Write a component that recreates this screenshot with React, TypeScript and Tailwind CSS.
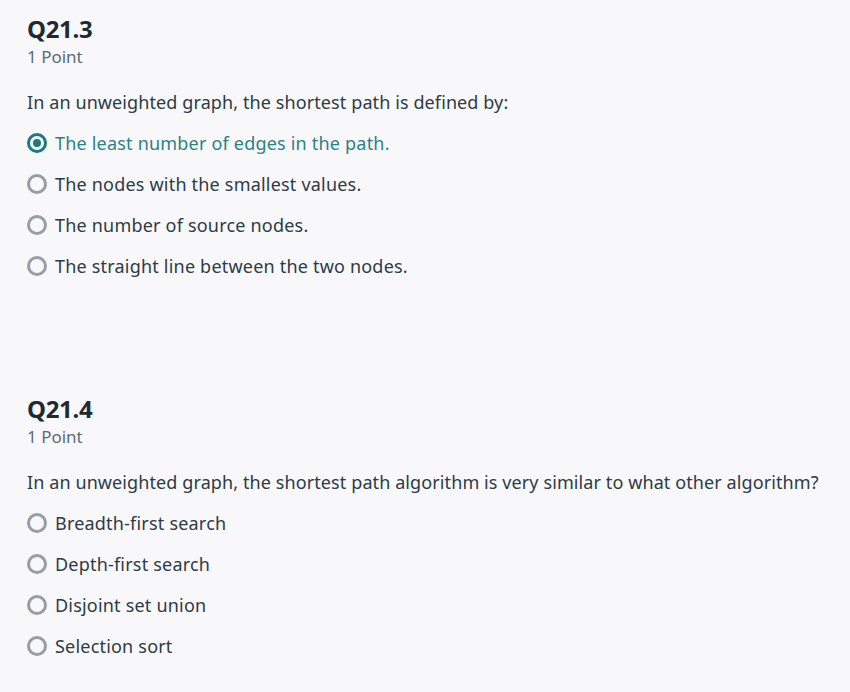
import React from "react";

type Question = {
  id: string;
  points: string;
  prompt: string;
  options: string[];
  selected?: number;
};

const questions: Question[] = [
  {
    id: "Q21.3",
    points: "1 Point",
    prompt: "In an unweighted graph, the shortest path is defined by:",
    options: [
      "The least number of edges in the path.",
      "The nodes with the smallest values.",
      "The number of source nodes.",
      "The straight line between the two nodes.",
    ],
    selected: 0,
  },
  {
    id: "Q21.4",
    points: "1 Point",
    prompt:
      "In an unweighted graph, the shortest path algorithm is very similar to what other algorithm?",
    options: [
      "Breadth-first search",
      "Depth-first search",
      "Disjoint set union",
      "Selection sort",
    ],
  },
];

function Radio({ checked }: { checked: boolean }) {
  return (
    <span
      className={
        "flex h-[20px] w-[20px] shrink-0 items-center justify-center rounded-full border-[3px] " +
        (checked ? "border-[#1b7a7c]" : "border-[#949ea4]")
      }
    >
      {checked && <span className="h-[8px] w-[8px] rounded-full bg-[#1b7a7c]" />}
    </span>
  );
}

function QuestionBlock({ q }: { q: Question }) {
  return (
    <section>
      <h2 className="text-[24px] font-bold leading-[30px] text-[#1e2a30] tracking-[-0.3px]">{q.id}</h2>
      <div className="mt-[1px] text-[17px] leading-[24px] text-[#5d6b73]">{q.points}</div>
      <p className="mt-[21px] text-[18px] leading-[24px] tracking-[0.1px] text-[#2d3b45]">{q.prompt}</p>
      <ul className="mt-[8px]">
        {q.options.map((opt, i) => {
          const checked = q.selected === i;
          return (
            <li key={opt} className="flex h-[41px] items-center gap-[8px]">
              <Radio checked={checked} />
              <span
                className={
                  "text-[18px] leading-[24px] tracking-[0.2px] " +
                  (checked ? "text-[#2a8289]" : "text-[#2d3b45]")
                }
              >
                {opt}
              </span>
            </li>
          );
        })}
      </ul>
    </section>
  );
}

export default function App() {
  return (
    <div
      className="min-h-[692px] bg-[#f8f8fb] pl-[27px] pr-[12px] pt-[14px]"
      style={{ fontFamily: "'Noto Sans', sans-serif" }}
    >
      <QuestionBlock q={questions[0]} />
      <div className="h-[108px]" />
      <QuestionBlock q={questions[1]} />
    </div>
  );
}
